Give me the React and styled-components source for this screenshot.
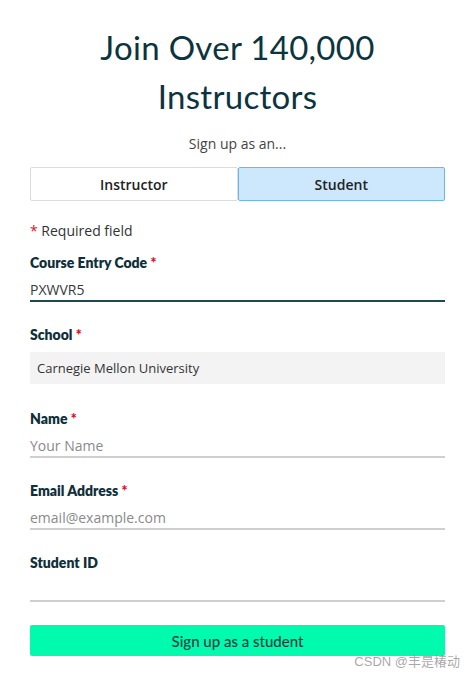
import React, { useState } from 'react';
import styled, { createGlobalStyle } from 'styled-components';

const GlobalStyle = createGlobalStyle`
  html, body {
    margin: 0;
    padding: 0;
    background: #fff;
  }
  body {
    font-family: "Open Sans", "Noto Sans", sans-serif;
  }
`;

export default function App() {
  const [role, setRole] = useState('student');

  return (
    <Page>
      <GlobalStyle />
      <Title>Join Over 140,000<br />Instructors</Title>
      <Subtitle>Sign up as an...</Subtitle>
      <Toggle>
        <ToggleButton active={role === 'instructor'} onClick={() => setRole('instructor')}>
          Instructor
        </ToggleButton>
        <ToggleButton active={role === 'student'} onClick={() => setRole('student')}>
          Student
        </ToggleButton>
      </Toggle>

      <Note><Star>*</Star> Required field</Note>

      <Field>
        <Label>Course Entry Code <Star>*</Star></Label>
        <LineInput focused defaultValue="PXWVR5" />
      </Field>

      <Field>
        <Label>School <Star>*</Star></Label>
        <SchoolBox>Carnegie Mellon University</SchoolBox>
      </Field>

      <Field>
        <Label>Name <Star>*</Star></Label>
        <LineInput placeholder="Your Name" />
      </Field>

      <Field>
        <Label>Email Address <Star>*</Star></Label>
        <LineInput placeholder="email@example.com" />
      </Field>

      <Field>
        <Label>Student ID</Label>
        <LineInput />
      </Field>

      <Submit>Sign up as a student</Submit>
      <Watermark>CSDN @丰是椿动</Watermark>
    </Page>
  );
}

const Page = styled.div`
  position: relative;
  width: 474px;
  height: 676px;
  box-sizing: border-box;
  padding: 23px 29px 0 30px;
  display: flex;
  flex-direction: column;
  overflow: hidden;
`;

const Title = styled.h1`
  margin: 0;
  font-family: "Lato", sans-serif;
  font-weight: 400;
  font-size: 33px;
  line-height: 49px;
  color: #0b3440;
  text-align: center;
  letter-spacing: 0.3px;
`;

const Subtitle = styled.div`
  margin-top: 13px;
  font-size: 14px;
  line-height: 19px;
  color: #444;
  text-align: center;
`;

const Toggle = styled.div`
  margin-top: 14px;
  display: grid;
  grid-template-columns: 1fr 1fr;
`;

const ToggleButton = styled.button`
  height: 34px;
  font-family: "Open Sans", sans-serif;
  font-weight: 600;
  font-size: 14px;
  color: #222;
  cursor: pointer;
  border: 1px solid ${(p) => (p.active ? '#6db6ec' : '#dcdcdc')};
  background: ${(p) => (p.active ? '#cde8fc' : '#fff')};
  border-radius: 2px;
  padding: 0;
`;

const Note = styled.div`
  margin-top: 20px;
  font-size: 14px;
  line-height: 19px;
  color: #333;
`;

const Star = styled.span`
  color: #d0162f;
`;

const Field = styled.div`
  display: flex;
  flex-direction: column;
  margin-top: 14px;
  & + & {
    margin-top: 24px;
  }
`;

const Label = styled.label`
  font-family: "Lato", sans-serif;
  font-weight: 800;
  font-size: 14px;
  color: #0f2f3a;
  line-height: 18px;
`;

const LineInput = styled.input`
  margin-top: 8px;
  border: none;
  border-bottom: 2px solid ${(p) => (p.focused ? '#1e4a4f' : '#cfcfcf')};
  outline: none;
  font-family: "Open Sans", sans-serif;
  font-size: 14px;
  color: #3a3a3a;
  padding: 0 0 2px 0;
  height: 18px;
  background: transparent;
  &::placeholder {
    color: #8a8a8a;
  }
`;

const SchoolBox = styled.div`
  margin: 8px 0 2px;
  height: 32px;
  background: #f3f3f3;
  display: flex;
  align-items: center;
  padding-left: 7px;
  font-size: 13px;
  color: #333;
`;

const Submit = styled.button`
  margin-top: 23px;
  height: 31px;
  border: none;
  border-radius: 2px;
  background: #00fbae;
  font-family: "Lato", sans-serif;
  font-size: 15px;
  font-weight: 500;
  color: #143c3c;
  cursor: pointer;
`;

const Watermark = styled.div`
  position: absolute;
  right: 14px;
  bottom: 6px;
  font-family: "Liberation Sans", "Noto Sans CJK SC", sans-serif;
  font-size: 13px;
  color: rgba(130, 130, 130, 0.7);
`;
